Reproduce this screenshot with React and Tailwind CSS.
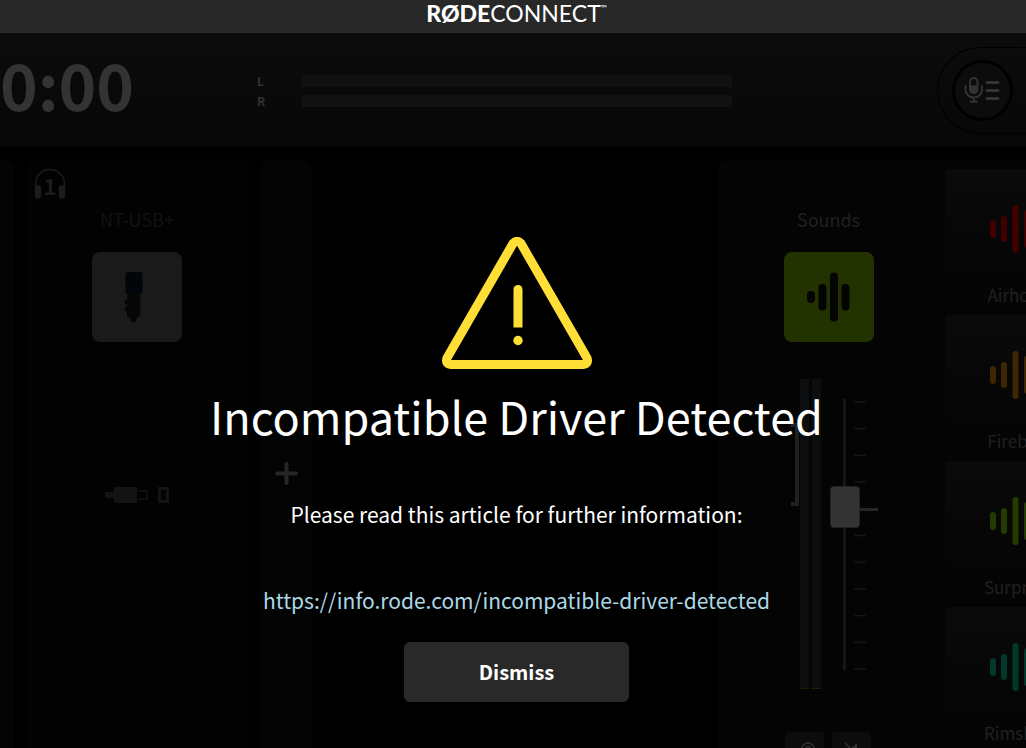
import React from "react";

const pads = [
  { name: "Airhorn", color: "text-[#400000]" },
  { name: "Fireball", color: "text-[#3d2600]" },
  { name: "Surprise", color: "text-[#233b00]" },
  { name: "Rimshot", color: "text-[#00382a]" },
];

const ticks = [0, 1, 2, 3, 4, 5, 6, 7, 8, 9, 10];

const Header = () => (
  <header className="h-[33px] shrink-0 bg-[#282828] pl-[7px] flex justify-center items-start font-['Lato',sans-serif] text-white text-[23px] leading-[27px]">
    <span className="font-black">RØDE</span>
    <span>CONNECT</span>
    <span className="text-[8px] leading-[16px]">™</span>
  </header>
);

const MicListIcon = () => (
  <svg className="shrink-0" width="38" height="28" viewBox="0 0 38 28" fill="none" stroke="currentColor">
    <rect x="6" y="2" width="7.500" height="15" rx="3.750" strokeWidth="2" />
    <path d="M5.500 9.500h8.500v4a4 4 0 0 1-8.500 0z" fill="currentColor" stroke="none" />
    <path d="M1.500 9.500v4a8.200 8 0 0 0 16.500 0v-4M9.750 21.500v4M6 25.700h7.500" strokeWidth="2" />
    <path d="M23 6.500h11M23 14.500h11M23 22.500h11" strokeWidth="3" strokeLinecap="round" />
  </svg>
);

const TopBar = () => (
  <section className="h-[114px] shrink-0 bg-linear-to-b from-[#0c0c0c] to-[#070707] flex items-center justify-between overflow-hidden">
    <div className="flex items-center">
      <time className="w-[257px] pb-3.5 text-[64px] leading-[80px] font-bold text-[#333333]">0:00</time>
      <div className="pt-0.5 flex flex-col text-[12px] leading-5 font-bold text-[#333333]">
        {["L", "R"].map((side) => (
          <div key={side} className="flex items-center">
            <span className="w-[45px]">{side}</span>
            <div className="w-[430px] h-3 bg-[#111111]" />
          </div>
        ))}
      </div>
    </div>
    <div className="w-[89px] h-[87px] shrink-0 rounded-l-full border border-r-0 border-black pl-3.5 flex items-center">
      <button
        aria-label="Microphone settings"
        className="size-[61px] rounded-full border-3 border-black bg-[#0c0c0c] text-[#333333] flex items-center justify-center"
      >
        <MicListIcon />
      </button>
    </div>
  </section>
);

const WaveIcon = () => (
  <svg width="44" height="50" viewBox="0 0 44 50" fill="none" stroke="#040404" strokeWidth="8" strokeLinecap="round">
    <path d="M4 23v4M15.500 16v18.500M27 4.500v41M38.500 16v18.500" />
  </svg>
);

const PadIcon = () => (
  <svg width="56" height="48" viewBox="0 0 56 48" fill="none" stroke="currentColor" strokeWidth="6" strokeLinecap="round">
    <path d="M4 18v12M15 14v20M26.500 3v42M38 8v32M49 16v16" />
  </svg>
);

const MicIcon = () => (
  <svg width="26" height="52" viewBox="0 0 26 52">
    <rect x="1.500" y="1" width="17" height="22" rx="3" fill="#02050a" />
    <path d="M3.500 22h13v22l-4 4-1 3h-4l-1-3-3.500-3z" fill="#060606" />
    <circle cx="3" cy="31" r="2.500" fill="#060606" />
    <circle cx="3" cy="38" r="2.500" fill="#060606" />
  </svg>
);

const HeadphoneBadge = () => (
  <button aria-label="Headphones 1" className="relative size-8 text-[#1c1c1c]">
    <svg width="32" height="32" viewBox="0 0 32 32" fill="none" stroke="currentColor">
      <path d="M1.500 20v-4a14.500 14.500 0 0 1 29 0v4" strokeWidth="1.500" />
      <path d="M4 20.500v7M28 20.500v7" strokeWidth="6.500" strokeLinecap="round" />
    </svg>
    <span className="absolute inset-0 text-center text-[22px] leading-[34px] font-bold">1</span>
  </button>
);

const MicChannel = () => (
  <section className="w-[222px] shrink-0 rounded-t-lg bg-[#020202] px-2 pt-2 flex flex-col">
    <HeadphoneBadge />
    <div className="flex flex-col items-center">
      <h2 className="mt-[5px] text-[18px] leading-7 text-[#121212]">NT-USB+</h2>
      <button aria-label="NT-USB+" className="mt-[19px] size-[90px] rounded-lg bg-[#1a1a1a] flex items-center justify-center">
        <MicIcon />
      </button>
      <svg className="mt-[145px]" width="64" height="16" viewBox="0 0 64 16" fill="none" stroke="#131313">
        <path d="M0 5h9v6H0z" fill="#131313" stroke="none" />
        <rect x="9" y="0" width="23" height="16" rx="1" fill="#131313" stroke="none" />
        <path d="M33 4h9v8h-9" strokeWidth="1.500" />
        <rect x="54.500" y="1.500" width="8" height="13" strokeWidth="3" />
      </svg>
    </div>
  </section>
);

const Fader = () => (
  <div className="mt-[37px] h-[310px] shrink-0 pl-[72px] flex items-start">
    <svg className="mt-11" width="9" height="84" viewBox="0 0 9 84" fill="none" stroke="#202020" strokeWidth="4">
      <path d="M0 2h6v79H0" />
    </svg>
    <div className="flex gap-[3px] h-full">
      <div className="w-[9px] bg-[#0b0d0e] border-b border-[#202000]" />
      <div className="w-[9px] bg-[#0b0d0e] border-b border-[#202000]" />
    </div>
    <div className="relative ml-[9px] mt-5 flex">
      <input
        type="range"
        aria-label="Sounds level"
        defaultValue="62"
        className="relative z-10 w-[30px] h-[271px] appearance-none bg-transparent [writing-mode:vertical-lr] [direction:rtl] [&::-webkit-slider-runnable-track]:appearance-none [&::-webkit-slider-runnable-track]:bg-[linear-gradient(90deg,transparent_13px,#161616_13px,#161616_16px,transparent_16px)] [&::-webkit-slider-runnable-track]:w-[30px] [&::-webkit-slider-thumb]:appearance-none [&::-webkit-slider-thumb]:w-[30px] [&::-webkit-slider-thumb]:h-[42px] [&::-webkit-slider-thumb]:rounded-sm [&::-webkit-slider-thumb]:bg-[#333333] [&::-webkit-slider-thumb]:border [&::-webkit-slider-thumb]:border-[#222222]"
      />
      <svg className="absolute left-[23px] top-0" width="28" height="273" viewBox="0 0 28 273" stroke="#161616" strokeWidth="1.500">
        {ticks.filter((i) => i !== 4).map((i) => (
          <path key={i} d={`M1 ${3 + i * 26.700}h12`} />
        ))}
        <path d="M5 110.500h20" stroke="#262626" strokeWidth="3" />
      </svg>
    </div>
  </div>
);

const SoundsPanel = () => (
  <section className="w-[307px] shrink-0 rounded-tl-lg bg-[#040404] flex overflow-hidden">
    <div className="w-[219px] shrink-0 pt-[45px] flex flex-col">
      <h2 className="shrink-0 text-center text-[18px] leading-7 text-[#202020]">Sounds</h2>
      <button aria-label="Sounds" className="mt-[19px] size-[90px] shrink-0 self-center rounded-lg bg-[#223300] flex items-center justify-center">
        <WaveIcon />
      </button>
      <Fader />
      <div className="mt-[43px] pl-[66px] flex gap-2 text-[#303030]">
        <button aria-label="Listen" className="w-[39px] h-10 shrink-0 rounded-sm bg-[#0c0c0c] flex justify-center pt-2.5 pl-1.5">
          <svg width="16" height="16" viewBox="0 0 16 16" fill="none" stroke="currentColor" strokeWidth="1.500">
            <circle cx="8" cy="7" r="6" />
            <circle cx="8" cy="7" r="2.500" />
          </svg>
        </button>
        <button aria-label="Mute" className="w-[39px] h-10 shrink-0 rounded-sm bg-[#0c0c0c] flex justify-center pt-2.5">
          <svg width="16" height="16" viewBox="0 0 16 16" fill="none" stroke="currentColor" strokeWidth="1.500">
            <path d="M1 1l14 14" />
            <path d="M7 6l6-5v7z" fill="currentColor" stroke="none" />
          </svg>
        </button>
      </div>
    </div>
    <div className="pl-[7px] pt-[9px] flex flex-col gap-1">
      {pads.map((pad) => (
        <button
          key={pad.name}
          className={`w-36 h-[142px] shrink-0 rounded-sm bg-linear-to-b from-[#0a0a0a] to-[#040404] pt-9 flex flex-col items-center ${pad.color}`}
        >
          <PadIcon />
          <span className="mt-7 text-[17px] leading-7 text-[#202020]">{pad.name}</span>
        </button>
      ))}
    </div>
  </section>
);

const DriverModal = () => (
  <div
    role="dialog"
    aria-labelledby="driver-title"
    className="absolute inset-0 z-20 pt-[237px] pl-[7px] flex flex-col items-center text-white"
  >
    <svg className="shrink-0" width="150" height="132" viewBox="0 0 150 132" fill="none" stroke="#ffde36" strokeWidth="9" strokeLinejoin="round">
      <path d="M71 6.500Q75 2 79 6.500L145 121Q147 127 141 127.500H9Q3 127 5 121Z" />
      <path d="M71.500 90.500V52.500a4.500 4.500 0 0 1 9 0v38z" fill="#ffde36" stroke="none" />
      <circle cx="76" cy="103.500" r="4.700" fill="#ffde36" stroke="none" />
    </svg>
    <h1 id="driver-title" className="mt-[17px] text-[45px] leading-[60px] whitespace-nowrap">
      Incompatible Driver Detected
    </h1>
    <p className="mt-[52px] text-[21px] leading-8">Please read this article for further information:</p>
    <a
      href="https://info.rode.com/incompatible-driver-detected"
      className="mt-[54px] text-[21px] leading-8 text-[#add8e6]"
    >
      https://info.rode.com/incompatible-driver-detected
    </a>
    <button className="mt-[26px] w-[225px] h-[60px] rounded-md bg-[#292929] text-[20px] leading-8 font-bold">
      Dismiss
    </button>
  </div>
);

const App = () => {
  return (
    <div className="relative h-screen overflow-hidden bg-black flex flex-col font-['Noto_Sans_CJK_SC',sans-serif]">
      <Header />
      <TopBar />

      {/* Mixer */}
      <main className="flex-1 min-h-0 pt-[13px] flex overflow-hidden">
        <div className="w-3.5 shrink-0 rounded-tr-lg bg-[#040404]" />
        <div className="ml-3 flex">
          <MicChannel />
        </div>
        <button
          aria-label="Add channel"
          className="ml-3 w-[52px] shrink-0 rounded-t-lg bg-[#040404] flex flex-col items-center pt-[302px] text-[#262626]"
        >
          <svg width="23" height="23" viewBox="0 0 23 23" stroke="currentColor" strokeWidth="4" strokeLinecap="round">
            <path d="M11.500 2v19M2 11.500h19" />
          </svg>
        </button>
        <div className="flex-1" />
        <SoundsPanel />
      </main>

      <DriverModal />
    </div>
  );
};

export default App;
